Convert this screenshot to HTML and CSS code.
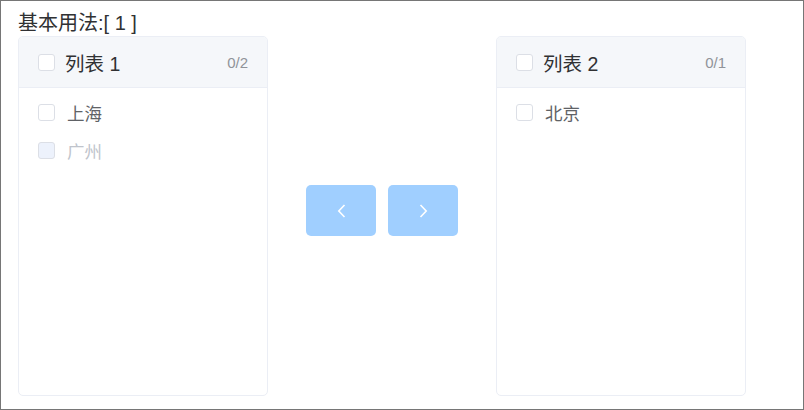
FILE: index.html
```html
<!DOCTYPE html>
<html>
<head>
<meta charset="utf-8">
<link rel="stylesheet" href="styles.css">
</head>
<body>
<div class="frame">
  <div class="title">基本用法:[ 1 ]</div>
  <div class="transfer">
    <div class="panel">
      <div class="panel-header">
        <span class="cb"></span>
        <span class="header-label">列表 1</span>
        <span class="count">0/2</span>
      </div>
      <div class="panel-body">
        <div class="item"><span class="cb"></span><span class="item-label">上海</span></div>
        <div class="item disabled"><span class="cb"></span><span class="item-label">广州</span></div>
      </div>
    </div>
    <div class="buttons">
      <button class="btn"><svg width="9" height="14" viewBox="0 0 9 14"><path d="M7.5 1 L1.8 7 L7.5 13" fill="none" stroke="#fff" stroke-width="1.6"/></svg></button>
      <button class="btn"><svg width="9" height="14" viewBox="0 0 9 14"><path d="M1.5 1 L7.2 7 L1.5 13" fill="none" stroke="#fff" stroke-width="1.6"/></svg></button>
    </div>
    <div class="panel">
      <div class="panel-header">
        <span class="cb"></span>
        <span class="header-label">列表 2</span>
        <span class="count">0/1</span>
      </div>
      <div class="panel-body">
        <div class="item"><span class="cb"></span><span class="item-label">北京</span></div>
      </div>
    </div>
  </div>
</div>
</body>
</html>
```
FILE: styles.css
```css
html, body {
  margin: 0;
  padding: 0;
  background: #fff;
}
.frame {
  box-sizing: border-box;
  width: 804px;
  height: 410px;
  border: 1px solid #767676;
  padding: 10px 0 0 17px;
  font-family: "Liberation Sans", "Noto Sans CJK SC", sans-serif;
}
.title {
  font-size: 20px;
  line-height: 25px;
  color: #303133;
}
.transfer {
  display: flex;
  align-items: flex-start;
}
.panel {
  box-sizing: border-box;
  width: 250px;
  height: 360px;
  border: 1px solid #ebeef5;
  border-radius: 5px;
  overflow: hidden;
  background: #fff;
}
.panel-header {
  box-sizing: border-box;
  height: 51px;
  background: #f5f7fa;
  border-bottom: 1px solid #ebeef5;
  display: flex;
  align-items: center;
  padding: 0 19px 0 19px;
}
.cb {
  box-sizing: border-box;
  display: inline-block;
  width: 17px;
  height: 17px;
  border: 1px solid #dcdfe6;
  border-radius: 3px;
  background: #fff;
  flex: none;
}
.header-label {
  margin-left: 10px;
  font-size: 19.5px;
  color: #303133;
  flex: 1;
}
.count {
  font-size: 15px;
  color: #909399;
}
.panel-body {
  padding-top: 5px;
}
.item {
  height: 38px;
  display: flex;
  align-items: center;
  padding-left: 19px;
}
.item-label {
  margin-left: 12px;
  font-size: 17.5px;
  color: #606266;
}
.item.disabled .cb {
  background: #edf2fc;
  border-color: #dcdfe6;
}
.item.disabled .item-label {
  color: #c0c4cc;
}
.buttons {
  display: flex;
  gap: 12px;
  margin: 149px 38px 0 38px;
}
.btn {
  width: 70px;
  height: 51px;
  border: none;
  border-radius: 5px;
  background: #a0cfff;
  display: flex;
  align-items: center;
  justify-content: center;
  padding: 0;
}
```
